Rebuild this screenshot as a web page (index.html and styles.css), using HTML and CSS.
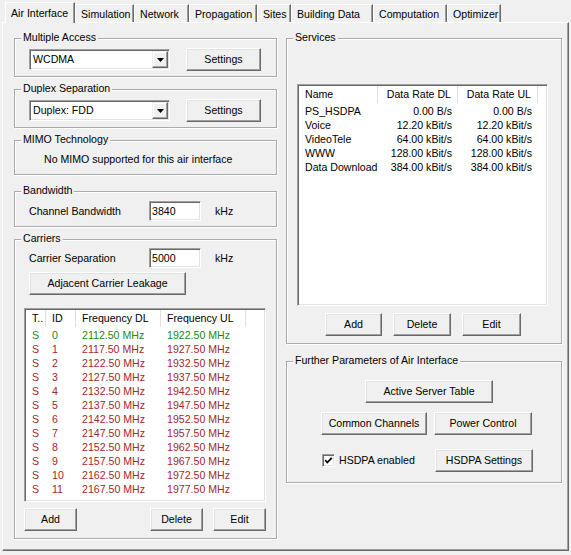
FILE: index.html
```html
<!DOCTYPE html>
<html>
<head>
<meta charset="utf-8">
<link rel="stylesheet" href="styles.css">
</head>
<body>
<div class="tabs">
  <div class="tab active w-air">Air Interface</div>
  <div class="tab w-sim">Simulation</div>
  <div class="tab w-net">Network</div>
  <div class="tab w-prop">Propagation</div>
  <div class="tab w-sites">Sites</div>
  <div class="tab w-bd">Building Data</div>
  <div class="tab w-comp">Computation</div>
  <div class="tab w-opt">Optimizer</div>
</div>
<div class="panel">
  <div class="col left">
    <div class="group g-combo">
      <div class="gtitle">Multiple Access</div>
      <div class="row">
        <div class="field combo"><span class="combo-text">WCDMA</span><span class="combo-btn"><svg width="7" height="4" viewBox="0 0 7 4"><polygon points="0,0 7,0 3.5,4" fill="#000"/></svg></span></div>
        <div class="btn b-settings">Settings</div>
      </div>
    </div>
    <div class="group g-combo mt12">
      <div class="gtitle">Duplex Separation</div>
      <div class="row">
        <div class="field combo"><span class="combo-text">Duplex: FDD</span><span class="combo-btn"><svg width="7" height="4" viewBox="0 0 7 4"><polygon points="0,0 7,0 3.5,4" fill="#000"/></svg></span></div>
        <div class="btn b-settings">Settings</div>
      </div>
    </div>
    <div class="group g-mimo mt12">
      <div class="gtitle">MIMO Technology</div>
      <div class="mimo-text">No MIMO supported for this air interface</div>
    </div>
    <div class="group g-bw mt16">
      <div class="gtitle">Bandwidth</div>
      <div class="row">
        <span class="lbl">Channel Bandwidth</span>
        <div class="field input">3840</div>
        <span class="unit">kHz</span>
      </div>
    </div>
    <div class="group g-car mt12">
      <div class="gtitle">Carriers</div>
      <div class="row indent">
        <span class="lbl">Carrier Separation</span>
        <div class="field input">5000</div>
        <span class="unit">kHz</span>
      </div>
      <div class="btn b-acl">Adjacent Carrier Leakage</div>
      <div class="field list car-list">
        <div class="lv-head">
          <div class="h c1">T..</div>
          <div class="h c2">ID</div>
          <div class="h c3">Frequency DL</div>
          <div class="h c4">Frequency UL</div>
        </div>
        <div class="lv-body">
          <div class="lv-row green"><span class="c1">S</span><span class="c2">0</span><span class="c3">2112.50 MHz</span><span class="c4">1922.50 MHz</span></div>
          <div class="lv-row red"><span class="c1">S</span><span class="c2">1</span><span class="c3">2117.50 MHz</span><span class="c4">1927.50 MHz</span></div>
          <div class="lv-row red"><span class="c1">S</span><span class="c2">2</span><span class="c3">2122.50 MHz</span><span class="c4">1932.50 MHz</span></div>
          <div class="lv-row red"><span class="c1">S</span><span class="c2">3</span><span class="c3">2127.50 MHz</span><span class="c4">1937.50 MHz</span></div>
          <div class="lv-row red"><span class="c1">S</span><span class="c2">4</span><span class="c3">2132.50 MHz</span><span class="c4">1942.50 MHz</span></div>
          <div class="lv-row red"><span class="c1">S</span><span class="c2">5</span><span class="c3">2137.50 MHz</span><span class="c4">1947.50 MHz</span></div>
          <div class="lv-row red"><span class="c1">S</span><span class="c2">6</span><span class="c3">2142.50 MHz</span><span class="c4">1952.50 MHz</span></div>
          <div class="lv-row red"><span class="c1">S</span><span class="c2">7</span><span class="c3">2147.50 MHz</span><span class="c4">1957.50 MHz</span></div>
          <div class="lv-row red"><span class="c1">S</span><span class="c2">8</span><span class="c3">2152.50 MHz</span><span class="c4">1962.50 MHz</span></div>
          <div class="lv-row red"><span class="c1">S</span><span class="c2">9</span><span class="c3">2157.50 MHz</span><span class="c4">1967.50 MHz</span></div>
          <div class="lv-row red"><span class="c1">S</span><span class="c2">10</span><span class="c3">2162.50 MHz</span><span class="c4">1972.50 MHz</span></div>
          <div class="lv-row red"><span class="c1">S</span><span class="c2">11</span><span class="c3">2167.50 MHz</span><span class="c4">1977.50 MHz</span></div>
        </div>
      </div>
      <div class="car-btns">
        <div class="btn b-small">Add</div>
        <div class="spacer"></div>
        <div class="btn b-small">Delete</div>
        <div class="btn b-small ml10">Edit</div>
      </div>
    </div>
  </div>
  <div class="col right">
    <div class="group g-svc">
      <div class="gtitle">Services</div>
      <div class="field list svc-list">
        <div class="lv-head">
          <div class="h s1">Name</div>
          <div class="h s2 ra">Data Rate DL</div>
          <div class="h s3 ra">Data Rate UL</div>
        </div>
        <div class="lv-body">
          <div class="lv-row"><span class="s1">PS_HSDPA</span><span class="s2 ra">0.00 B/s</span><span class="s3 ra">0.00 B/s</span></div>
          <div class="lv-row"><span class="s1">Voice</span><span class="s2 ra">12.20 kBit/s</span><span class="s3 ra">12.20 kBit/s</span></div>
          <div class="lv-row"><span class="s1">VideoTele</span><span class="s2 ra">64.00 kBit/s</span><span class="s3 ra">64.00 kBit/s</span></div>
          <div class="lv-row"><span class="s1">WWW</span><span class="s2 ra">128.00 kBit/s</span><span class="s3 ra">128.00 kBit/s</span></div>
          <div class="lv-row"><span class="s1">Data Download</span><span class="s2 ra">384.00 kBit/s</span><span class="s3 ra">384.00 kBit/s</span></div>
        </div>
      </div>
      <div class="svc-btns">
        <div class="btn b-add">Add</div>
        <div class="btn b-del">Delete</div>
        <div class="btn b-edit">Edit</div>
      </div>
    </div>
    <div class="group g-fp mt17">
      <div class="gtitle">Further Parameters of Air Interface</div>
      <div class="btn b-ast">Active Server Table</div>
      <div class="fp-row2">
        <div class="btn b-cc">Common Channels</div>
        <div class="btn b-pc">Power Control</div>
      </div>
      <div class="fp-row3">
        <div class="chk-wrap">
          <span class="chk"><svg width="9" height="9" viewBox="0 0 9 9"><polyline points="1.2,4.2 3.3,6.5 7.8,1.8" fill="none" stroke="#000" stroke-width="1.8"/></svg></span>
          <span class="chk-lbl">HSDPA enabled</span>
        </div>
        <div class="btn b-hs">HSDPA Settings</div>
      </div>
    </div>
  </div>
</div>
</body>
</html>
```
FILE: styles.css
```css
* { box-sizing: border-box; }
html, body { margin: 0; padding: 0; }
body {
  width: 571px;
  height: 555px;
  overflow: hidden;
  background: #f0f0f0;
  font-family: "Liberation Sans", Arial, sans-serif;
  font-size: 10.6px;
  line-height: 13px;
  color: #000;
}

/* tabs */
.tabs { display: flex; align-items: flex-end; height: 22px; padding-left: 5px; }
.tab {
  height: 18px;
  padding: 3px 0 0 5px;
  border-top: 1px solid #fff;
  border-left: 1px solid #fff;
  border-right: 1px solid #696969;
  box-shadow: inset -1px 0 0 #a0a0a0;
  white-space: nowrap;
}
.tab.active {
  height: 21px;
  margin-bottom: -1px;
  padding-top: 4px;
  position: relative;
  z-index: 1;
  background: #f0f0f0;
}
.w-air { width: 70px; }
.w-sim { width: 59px; }
.w-net { width: 55px; }
.w-prop { width: 68px; }
.w-sites { width: 34px; }
.w-bd { width: 82px; }
.w-comp { width: 74px; }
.w-opt { width: 54px; }

/* panel */
.panel {
  margin-left: 2px;
  width: 567px;
  height: 529px;
  border: 1px solid;
  border-color: #fff #696969 #696969 #fff;
  box-shadow: inset -1px -1px 0 #a0a0a0;
  display: flex;
  gap: 9px;
  padding: 15px 0 0 11px;
}
.col { display: flex; flex-direction: column; }
.left { width: 263px; }
.right { width: 276px; }

/* group boxes */
.group {
  position: relative;
  border: 1px solid #aaaaaa;
  box-shadow: 1px 1px 0 #fff, inset 1px 1px 0 #fff;
}
.gtitle {
  position: absolute;
  top: -8px;
  left: 6px;
  padding: 0 2px;
  background: #f0f0f0;
  line-height: 13px;
  white-space: nowrap;
}
.mt12 { margin-top: 12px; }
.mt16 { margin-top: 16px; }
.mt17 { margin-top: 17px; }

.row { display: flex; align-items: center; }

.g-combo { padding: 9px 0 5px 14px; }
.g-mimo { padding: 12px 0 8px 29px; }
.g-bw { padding: 9px 0 5px 14px; }
.g-car { padding: 8px 0 7px 9px; }
.indent { padding-left: 5px; }

/* controls */
.btn {
  height: 23px;
  display: flex;
  align-items: center;
  justify-content: center;
  background: #f0f0f0;
  border: 1px solid;
  border-color: #fff #696969 #696969 #fff;
  box-shadow: inset -1px -1px 0 #a0a0a0, inset 1px 1px 0 #e3e3e3;
  white-space: nowrap;
}
.field {
  background: #fff;
  border: 1px solid;
  border-color: #a0a0a0 #fff #fff #a0a0a0;
  box-shadow: inset 1px 1px 0 #696969, inset -1px -1px 0 #e3e3e3;
}
.combo {
  width: 141px;
  height: 21px;
  display: flex;
  align-items: center;
  padding: 2px 1px 2px 3px;
}
.combo-text { flex: 1; }
.combo-btn {
  width: 16px;
  height: 17px;
  display: flex;
  align-items: center;
  justify-content: center;
  background: #f0f0f0;
  border: 1px solid;
  border-color: #f0f0f0 #696969 #696969 #f0f0f0;
  box-shadow: inset -1px -1px 0 #a0a0a0, inset 1px 1px 0 #fff;
}
.b-settings { width: 75px; margin-left: 16px; }

.mimo-text { line-height: 13px; white-space: nowrap; }

.lbl { width: 120px; }
.input { width: 52px; height: 20px; padding: 3px 0 0 2px; line-height: 13px; }
.unit { margin-left: 14px; }

.b-acl { width: 157px; margin: 4px 0 0 5px; }

/* list views */
.list { padding: 1px; }
.car-list { width: 242px; height: 194px; margin-top: 13px; }
.svc-list { width: 251px; height: 222px; }
.lv-head { display: flex; height: 17px; }
.lv-head .h {
  line-height: 17px;
  border-right: 1px solid #e0e0e0;
  white-space: nowrap;
}
.lv-body { padding-top: 1px; }
.lv-row { display: flex; height: 14px; line-height: 14px; white-space: nowrap; }
.c1, .c2, .c3, .c4, .s1 { padding-left: 6px; flex: none; }
.c1 { width: 20px; }
.c2 { width: 30px; }
.c3 { width: 85px; }
.c4 { width: 85px; }
.s1 { width: 79px; }
.s2 { width: 80px; flex: none; }
.s3 { width: 80px; flex: none; }
.ra { text-align: right; padding-right: 6px; }
.green { color: #208a20; }
.red { color: #a32a2a; }

.car-btns { display: flex; width: 242px; margin-top: 6px; }
.b-small { width: 53px; }
.spacer { flex: 1; }
.ml10 { margin-left: 10px; }

/* services */
.g-svc { padding: 45px 0 7px 10px; }
.svc-btns { display: flex; gap: 11px; margin-top: 7px; padding-left: 28px; }
.b-add { width: 57px; }
.b-del { width: 58px; }
.b-edit { width: 59px; }

/* further params */
.g-fp { padding: 18px 0 10px 0; }
.b-ast { width: 128px; margin-left: 78px; }
.fp-row2 { display: flex; gap: 7px; margin-top: 9px; padding-left: 34px; }
.b-cc { width: 106px; }
.b-pc { width: 98px; }
.fp-row3 { display: flex; align-items: center; margin-top: 14px; padding-left: 35px; }
.chk-wrap { width: 113px; display: flex; align-items: center; }
.chk {
  width: 13px;
  height: 13px;
  display: flex;
  align-items: center;
  justify-content: center;
  background: #fff;
  border: 1px solid;
  border-color: #a0a0a0 #fff #fff #a0a0a0;
  box-shadow: inset 1px 1px 0 #696969, inset -1px -1px 0 #e3e3e3;
}
.chk-lbl { margin-left: 4px; white-space: nowrap; }
.b-hs { width: 98px; }
```
